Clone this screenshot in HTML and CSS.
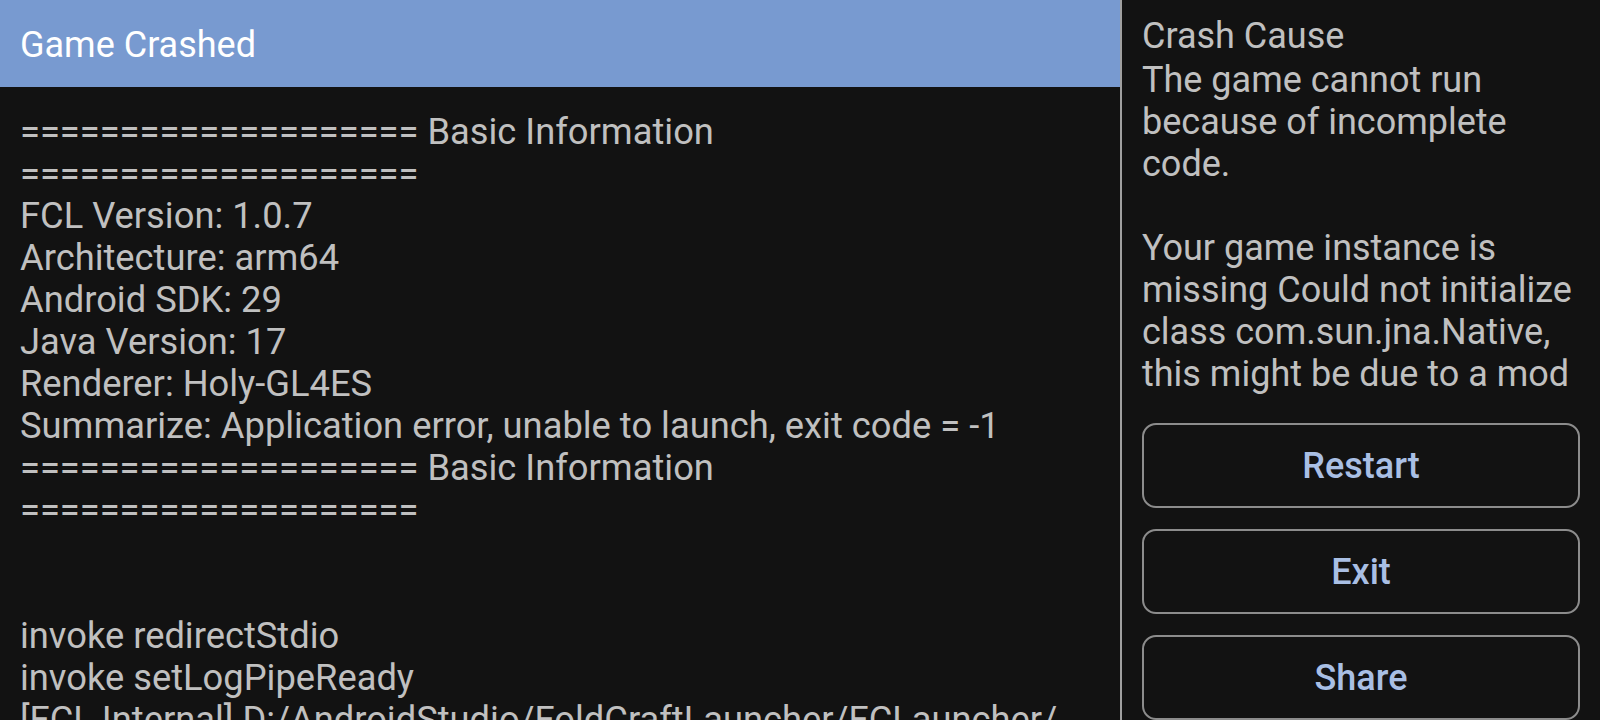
FILE: index.html
```html
<!DOCTYPE html>
<html lang="en">
<head>
  <meta charset="UTF-8">
  <meta name="viewport" content="width=device-width, initial-scale=1.0">
  <title>Game Crashed</title>
  <link rel="stylesheet" href="styles.css">
</head>
<body>
  <div class="main">
    <div class="toolbar">
      <h1>Game Crashed</h1>
    </div>
    <div class="log">==================== Basic Information ====================
FCL Version: 1.0.7
Architecture: arm64
Android SDK: 29
Java Version: 17
Renderer: Holy-GL4ES
Summarize: Application error, unable to launch, exit code = -1
==================== Basic Information ====================


invoke redirectStdio
invoke setLogPipeReady
[FCL Internal] D:/AndroidStudio/FoldCraftLauncher/FCLauncher/</div>
  </div>

  <div class="side">
    <div class="cause-title">Crash Cause</div>
    <div class="cause-text">The game cannot run because of incomplete code.

Your game instance is missing Could not initialize class com.sun.jna.Native, this might be due to a mod</div>

    <div class="actions">
      <button type="button" class="outline-btn">Restart</button>
      <button type="button" class="outline-btn">Exit</button>
      <button type="button" class="outline-btn">Share</button>
    </div>
  </div>
</body>
</html>
```

FILE: styles.css
```css
html, body {
  margin: 0;
  height: 720px;
  overflow: hidden;
}

body {
  display: flex;
  background: #121212;
  color: #c0c0c0;
  font-family: Roboto, "Noto Sans", sans-serif;
}

.main {
  width: 1120px;
  flex-shrink: 0;
  display: flex;
  flex-direction: column;
}

.toolbar {
  height: 87px;
  flex-shrink: 0;
  background: #789ad0;
  display: flex;
  align-items: center;
  padding-left: 20px;
}

.toolbar h1 {
  margin: 0 0 -3px 0;
  font-size: 36px;
  font-weight: 400;
  color: #ffffff;
}

.log {
  flex: 1;
  min-height: 0;
  padding: 24px 20px 0 20px;
  font-size: 36.3px;
  line-height: 42px;
  white-space: pre-wrap;
  overflow: hidden;
}

.side {
  flex: 1;
  border-left: 2px solid #a0a0a0;
  padding: 15px 20px 0 20px;
  display: flex;
  flex-direction: column;
}

.cause-title {
  font-size: 36px;
  line-height: 42px;
  margin-bottom: 2px;
}

.cause-text {
  font-size: 36px;
  line-height: 42px;
  white-space: pre-wrap;
}

.actions {
  display: flex;
  flex-direction: column;
  gap: 21px;
  margin-top: 28px;
}

.outline-btn {
  height: 85px;
  flex-shrink: 0;
  background: transparent;
  border: 2px solid #8c8c8c;
  border-radius: 14px;
  color: #a9bfe4;
  font-family: Roboto, "Noto Sans", sans-serif;
  font-size: 36px;
  font-weight: 500;
  cursor: pointer;
}
```
